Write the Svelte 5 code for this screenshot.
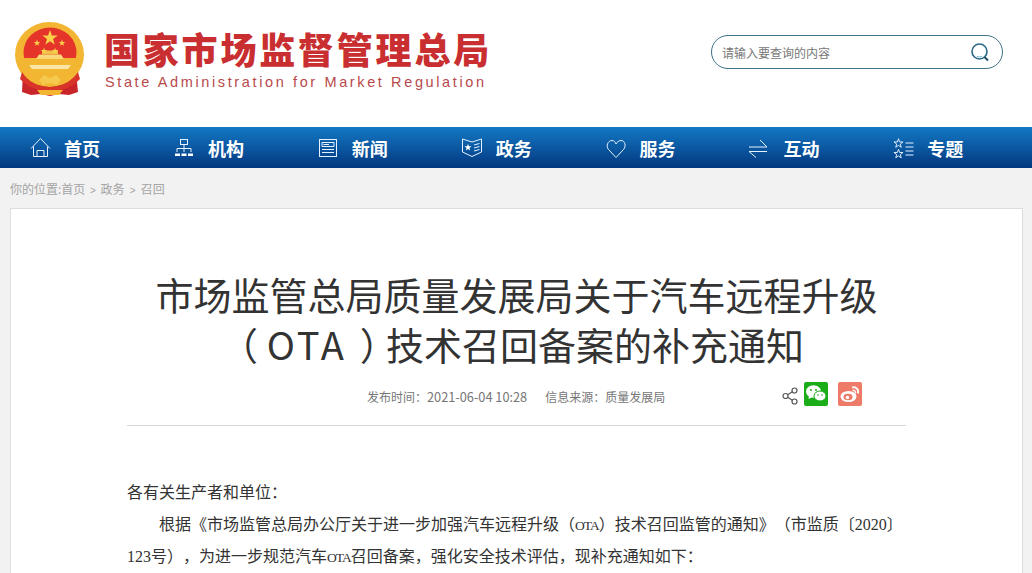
<script>
	const navItems = [
		{ label: '首页', icon: 'home' },
		{ label: '机构', icon: 'org' },
		{ label: '新闻', icon: 'news' },
		{ label: '政务', icon: 'gov' },
		{ label: '服务', icon: 'heart' },
		{ label: '互动', icon: 'swap' },
		{ label: '专题', icon: 'stars' }
	];
	const star = 'M0-5 1.2-1.6 4.8-1.6 1.9.6 2.9 4 0 2 -2.9 4 -1.9.6 -4.8-1.6 -1.2-1.6Z';
</script>

<div class="page">
	<header class="top">
		<div class="brand">
			<svg class="emblem" width="72" height="76" viewBox="0 0 72 76">
				<path d="M8 50 7 70 16 73 26 72 35 74 44 72 54 73 63 70 61 50Z" fill="#c9242a" />
				<ellipse cx="34.500" cy="32.500" rx="34.500" ry="32.500" fill="#f2b632" />
				<ellipse cx="35" cy="30.500" rx="26.500" ry="25" fill="#e5352b" />
				<path d="M9 36H61C59 49 47 56 35 56S11 49 9 36Z" fill="#f2b632" />
				<path d="M21 37 24 32.500H46L49 37Z" fill="#f8d878" />
				<rect x="27" y="28.500" width="16" height="4" fill="#f0c04a" />
				<path d="M14 43H56L53 47H17Z" fill="#fbe6a6" />
				<path d="M7 50C13 60 24 65 35 65S57 60 63 50L65 57C57 66 46 69 35 69S13 66 5 57Z" fill="#d8342a" />
				<path d="M24 58 29 53 35 56 41 53 46 58 42 63 35 61 28 63Z" fill="#f5c84e" />
				<path d="M22 68H48L44 73H26Z" fill="#f2b632" />
				<path d={star} fill="#f8d04a" transform="translate(35 16) scale(1.6)" />
				<path d={star} fill="#f8d04a" transform="translate(22 21) scale(.7)" />
				<path d={star} fill="#f8d04a" transform="translate(47 21) scale(.7)" />
				<path d={star} fill="#f8d04a" transform="translate(29 29) scale(.7)" />
				<path d={star} fill="#f8d04a" transform="translate(40 29) scale(.7)" />
			</svg>
			<div class="brand-text">
				<div class="cn-name">国家市场监督管理总局</div>
				<div class="en-name">State Administration for Market Regulation</div>
			</div>
		</div>
		<div class="search">
			<span class="placeholder">请输入要查询的内容</span>
			<svg width="22" height="22" viewBox="0 0 22 22" fill="none">
				<circle cx="10.500" cy="10.500" r="7.500" stroke="#2b6a86" stroke-width="1.600" />
				<path d="M15.500 16 19 19.500" stroke="#1f4f66" stroke-width="2" />
				<path d="M8 15.500C9.500 16 11.500 16 13 15.200" stroke="#6fb6d2" stroke-width="1" />
			</svg>
		</div>
	</header>

	<nav class="nav">
		{#each navItems as item}
			<a class="nav-item" href="#top">
				<svg class="nav-icon" width="22" height="22" viewBox="0 0 22 22" fill="none" stroke="#e6f2ff" stroke-width="1">
					{#if item.icon === 'home'}
						<path d="M2 11.500 11.500 1.500 21 11.500" />
						<path d="M4.500 9.500V19.500H18.500V9.500" />
						<path d="M8 19.500V13.500H15V19.500" />
					{:else if item.icon === 'org'}
						<rect x="7.500" y="2.500" width="7" height="5" />
						<path d="M11 7.500V11M4 15V11.500H18V15M11 11.500V15" />
						<path d="M2 16.500H7V19H2ZM8.500 16.500H13.500V19H8.500ZM15 16.500H20V19H15Z" fill="#fff" stroke="none" />
					{:else if item.icon === 'news'}
						<rect x="2.500" y="2.500" width="17" height="17" />
						<path d="M5 5.500H17V9.500H5ZM5 12.500H17M5 15.500H17" />
						<path d="M6.500 7.500H12" />
					{:else if item.icon === 'gov'}
						<path d="M1.500 2 11 5 20.500 2V15L11 19.500 1.500 15Z" />
						<path d="M13 8 18.500 6.500M13 11 18.500 9.500M13 14 18.500 12.500" />
						<path d={star} fill="#fff" stroke="none" transform="translate(7 10.500) scale(.75)" />
					{:else if item.icon === 'heart'}
						<path d="M11 20.500 3.500 12.500C.5 9 3 3.500 7 3.500 9 3.500 10.500 5 11 7 12 5 14 3.500 16 3.500 20 3.500 21.500 9 18.500 12.500Z" />
					{:else if item.icon === 'swap'}
						<path d="M1 10H19L12 3M19 14.500H1L8 20.500" />
					{:else}
						<path d={star} transform="translate(6.500 6.500) scale(.95)" />
						<path d={star} transform="translate(6.500 17) scale(.95)" />
						<path d="M13.500 6H21.500M13.500 10H21.500M13.500 14H21.500M13.500 18H21.500" />
					{/if}
				</svg>
				<span>{item.label}</span>
			</a>
		{/each}
	</nav>

	<main class="main">
		<div class="crumb">你的位置:首页 <i>&gt;</i> 政务 <i>&gt;</i> 召回</div>
		<article class="card">
			<h1>市场监管总局质量发展局关于汽车远程升级<br /><span class="open">（</span> <span class="ota">OTA</span> <span class="close">）</span>技术召回备案的补充通知</h1>
			<div class="meta">
				<div class="meta-text">
					<span>发布时间：<span class="date">2021-06-04 10:28</span></span>
					<span>信息来源：质量发展局</span>
				</div>
				<div class="share">
					<svg class="share-icon" width="16" height="18" viewBox="0 0 16 18" fill="none" stroke="#555" stroke-width="1.200">
						<circle cx="12.500" cy="3.500" r="2.500" />
						<circle cx="3.500" cy="9" r="2.500" />
						<circle cx="12.500" cy="14.500" r="2.500" />
						<path d="M5.700 7.700 10.300 4.800M5.700 10.300 10.300 13.200" />
					</svg>
					<span class="badge wechat">
						<svg width="22" height="20" viewBox="0 0 22 20" fill="#fff">
							<ellipse cx="8.500" cy="7.500" rx="7.500" ry="6.200" />
							<path d="M4 11.500 3.500 15 7.500 13Z" />
							<ellipse cx="15" cy="12" rx="6" ry="5" stroke="#1aad19" stroke-width="1" />
							<g fill="#1aad19">
								<circle cx="6" cy="6" r="1" />
								<circle cx="11" cy="6" r="1" />
							</g>
							<circle cx="13" cy="11" r=".8" fill="#1aad19" />
							<circle cx="17" cy="11" r=".8" fill="#1aad19" />
						</svg>
					</span>
					<span class="badge weibo">
						<svg width="22" height="20" viewBox="0 0 22 20" fill="none">
							<ellipse cx="9.500" cy="12.500" rx="8" ry="5.500" fill="#fff" />
							<ellipse cx="9" cy="13" rx="4.500" ry="3.300" fill="#ee7a68" />
							<circle cx="8.500" cy="13.500" r="1.800" fill="#fff" />
							<path d="M13 3.500C16.500 2.500 20 5 19 9.500" stroke="#fff" stroke-width="1.800" />
							<path d="M13.500 6.500C15.500 6 17 7.500 16.500 9.500" stroke="#fff" stroke-width="1.300" />
						</svg>
					</span>
				</div>
			</div>
			<div class="body">
				<p>各有关生产者和单位：</p>
				<p class="para">根据《市场监管总局办公厅关于进一步加强汽车远程升级（<span class="caps">OTA</span>）技术召回监管的通知》（市监质〔<span class="num">2020</span>〕<span class="num">123</span>号），为进一步规范汽车<span class="caps">OTA</span>召回备案，强化安全技术评估，现补充通知如下：</p>
			</div>
		</article>
	</main>
</div>

<style>
	:global(body) {
		margin: 0;
		background: #f2f2f2;
		overflow: hidden;
	}

	.page {
		width: 1032px;
		height: 573px;
		overflow: hidden;
		font-family: 'Noto Sans CJK SC', sans-serif;
		text-spacing-trim: space-all;
	}

	.top {
		height: 127px;
		background: #fff;
		display: flex;
		justify-content: space-between;
		box-sizing: border-box;
		padding: 22px 29px 0 15px;
	}

	.brand {
		display: flex;
		gap: 17px;
		align-items: flex-start;
	}

	.brand-text {
		padding-top: 5px;
	}

	.cn-name {
		font-size: 36px;
		font-weight: 900;
		line-height: 42px;
		letter-spacing: 2.800px;
		color: #c92f31;
		white-space: nowrap;
	}

	.en-name {
		font-family: 'Liberation Sans', sans-serif;
		font-size: 14.500px;
		line-height: 18px;
		margin-top: 4px;
		padding-left: 1px;
		letter-spacing: 2.620px;
		color: #b8494b;
		white-space: nowrap;
	}

	.search {
		width: 292px;
		height: 34px;
		margin-top: 13px;
		box-sizing: border-box;
		border: 1px solid #3d7186;
		border-radius: 17px;
		display: flex;
		align-items: center;
		justify-content: space-between;
		padding: 0 11px 0 10px;
	}

	.placeholder {
		font-size: 12px;
		color: #777;
	}

	.nav {
		height: 41px;
		background: linear-gradient(#1478c4, #02387f);
		display: flex;
		padding-left: 29px;
	}

	.nav-item {
		flex: none;
		width: 143.900px;
		display: flex;
		align-items: center;
		gap: 13px;
		color: #fff;
		text-decoration: none;
		font-size: 18px;
		font-weight: 700;
	}

	.main {
		padding: 0 9px 0 10px;
	}

	.crumb {
		height: 40px;
		line-height: 41px;
		font-size: 12px;
		color: #a4a4a4;
	}

	.crumb i {
		font-style: normal;
		font-family: 'Liberation Sans', sans-serif;
		font-size: 10px;
		margin: 0 2px;
	}

	.crumb i:last-of-type {
		margin: 0 2.500px;
	}

	.card {
		background: #fff;
		border: 1px solid #ddd;
		box-sizing: border-box;
		height: 400px;
		padding: 60px 116px 0;
	}

	h1 {
		margin: 0 -20px;
		font-size: 38px;
		font-weight: 400;
		line-height: 50px;
		color: #333;
		text-align: center;
		white-space: nowrap;
	}

	.open,
	.close {
		font-feature-settings: 'halt';
	}

	.open {
		margin: 0 0 0 10px;
	}

	.close {
		margin: 0 7px 0 4.400px;
	}

	.ota {
		letter-spacing: 3px;
	}

	.meta {
		height: 50px;
		margin-top: 6px;
		border-bottom: 1px solid #d8d8d8;
		display: flex;
		align-items: flex-start;
	}

	.meta-text {
		margin-left: 240px;
		padding-top: 12px;
		display: flex;
		gap: 18px;
		font-size: 12px;
		line-height: 20px;
		color: #777;
		white-space: nowrap;
	}

	.date {
		font-size: 12.750px;
	}

	.share {
		margin-left: 117px;
		padding-top: 7px;
		display: flex;
		align-items: center;
		gap: 6px;
	}

	.share-icon {
		margin-top: 3px;
	}

	.badge {
		width: 24px;
		height: 24px;
		border-radius: 2px;
		display: flex;
		align-items: center;
		justify-content: center;
		margin-right: 4px;
	}

	.wechat {
		background: #1aad19;
	}

	.weibo {
		background: #ee7a68;
	}

	.body {
		margin-top: 49px;
		font-family: 'Noto Sans CJK SC', sans-serif;
		font-size: 16px;
		line-height: 32px;
		color: #333;
	}

	.num,
	.caps {
		font-family: 'Liberation Serif', serif;
		line-height: 1;
	}

	.caps {
		font-size: 13.500px;
		letter-spacing: -1px;
	}

	p {
		margin: 0;
	}

	.para {
		text-indent: 32px;
	}
</style>
